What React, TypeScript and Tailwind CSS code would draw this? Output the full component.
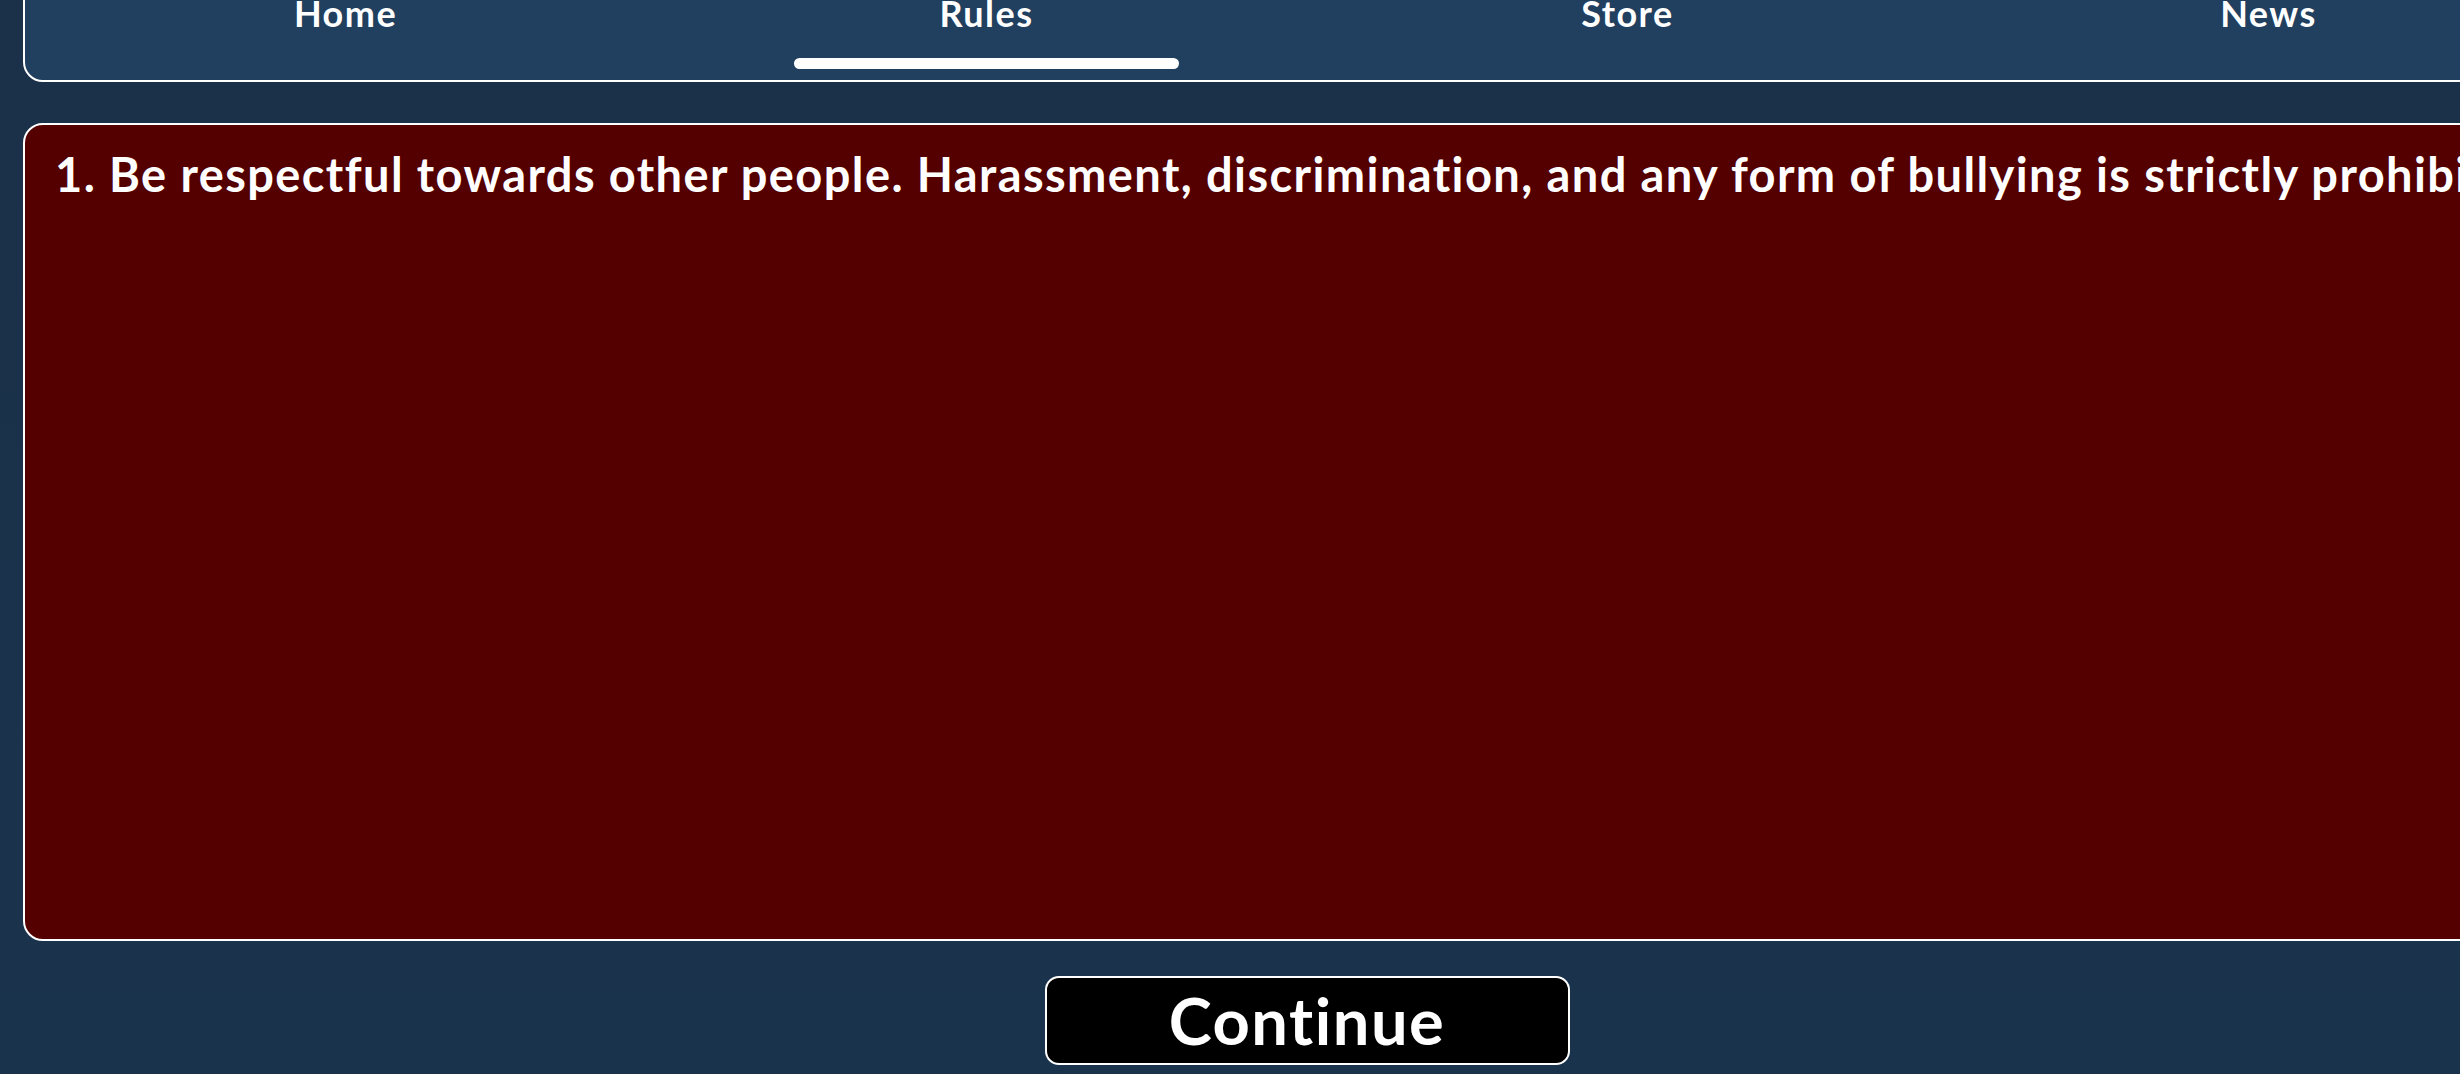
import React from 'react';

const tabs = ['Home', 'Rules', 'Store', 'News'];

export default function App() {
  const active = 'Rules';

  return (
    <div className="w-screen h-screen overflow-hidden bg-gradient-to-b from-[#1b3049] to-[#1a334d] font-['Lato','Liberation_Sans',sans-serif] font-bold text-white">
      <div className="w-[2614px] px-[23px] flex flex-col">
        <nav className="-mt-[30px] h-[112px] rounded-[20px] border-2 border-white bg-[#21405f] grid grid-cols-4">
          {tabs.map((t) => (
            <button key={t} type="button" className="flex flex-col items-center pt-[23px]">
              <span className="text-[36px] leading-none tracking-[1.5px]">{t}</span>
              {t === active && <span className="mt-[27px] h-[11px] w-[385px] rounded-full bg-white" />}
            </button>
          ))}
        </nav>

        <section className="mt-[41px] h-[818px] rounded-[20px] border-2 border-white bg-[#540000] pl-[30px] pt-[26px]">
          <p className="text-[47px] leading-none whitespace-nowrap tracking-[1.4px]">
            1. Be respectful towards other people. Harassment, discrimination, and any form of bullying is strictly prohibited.
          </p>
        </section>

        <button
          type="button"
          className="mt-[35px] mx-auto w-[525px] h-[89px] rounded-[14px] border-2 border-white bg-black text-[65px] leading-none tracking-[1.5px] flex items-center justify-center"
        >
          Continue
        </button>
      </div>
    </div>
  );
}
